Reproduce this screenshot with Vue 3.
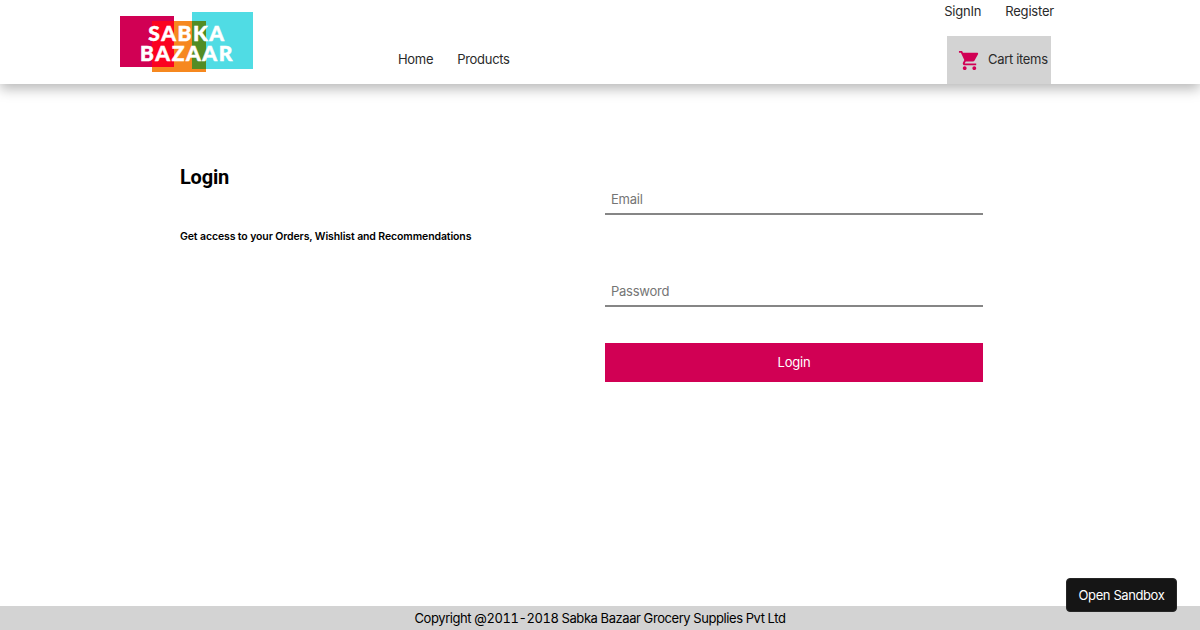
<script setup>
const navLinks = ['Home', 'Products']
const fields = [
  { type: 'email', placeholder: 'Email' },
  { type: 'password', placeholder: 'Password' }
]
</script>

<template>
  <div class="page">
    <header class="header">
      <div class="logo">
        <span class="block pink"></span>
        <span class="block teal"></span>
        <span class="block orange"></span>
        <span class="block red"></span>
        <span class="block green"></span>
        <span class="logo-text">SABKA<br />BAZAAR</span>
      </div>
      <nav class="nav">
        <a v-for="l in navLinks" :key="l" class="nav-link">{{ l }}</a>
      </nav>
      <div class="right">
        <div class="auth">
          <a>SignIn</a>
          <a>Register</a>
        </div>
        <div class="cart">
          <svg class="cart-icon" viewBox="0 0 24 24" width="23" height="23">
            <path fill="#d10054" d="M7 18c-1.1 0-1.99.9-1.99 2S5.900 22 7 22s2-.9 2-2-.9-2-2-2zM1 2v2h2l3.600 7.590-1.350 2.450c-.16.280-.25.610-.25.960 0 1.100.9 2 2 2h12v-2H7.420c-.14 0-.25-.11-.25-.25l.03-.12.9-1.630h7.450c.75 0 1.410-.41 1.750-1.030l3.580-6.490c.08-.14.12-.31.12-.48 0-.55-.45-1-1-1H5.210l-.94-2H1zm16 16c-1.100 0-1.990.9-1.990 2s.89 2 1.990 2 2-.9 2-2-.9-2-2-2z"/>
          </svg>
          <span class="cart-label">Cart items</span>
        </div>
      </div>
    </header>

    <main class="main">
      <section class="intro">
        <h1>Login</h1>
        <p>Get access to your Orders, Wishlist and Recommendations</p>
      </section>
      <form class="form" @submit.prevent>
        <input v-for="f in fields" :key="f.type" :type="f.type" :placeholder="f.placeholder" class="field" />
        <button class="submit" type="submit">Login</button>
      </form>
    </main>

    <footer class="footer">Copyright @2011-2018 Sabka Bazaar Grocery Supplies Pvt Ltd</footer>
    <button class="sandbox">Open Sandbox</button>
  </div>
</template>

<style>
html, body { margin: 0; padding: 0; background: #fff; }
</style>

<style scoped>
.page {
  position: relative;
  width: 1200px;
  height: 630px;
  display: flex;
  flex-direction: column;
  overflow: hidden;
  font-family: Inter, "Liberation Sans", sans-serif;
  letter-spacing: -0.2px;
  color: #2a2a2a;
}
.header {
  height: 84px;
  flex: none;
  display: flex;
  padding: 0 146px 0 120px;
  box-shadow: 0 5px 12px rgba(0, 0, 0, 0.28);
  position: relative;
  box-sizing: border-box;
}
.logo { position: relative; width: 133px; height: 84px; flex: none; }
.block { position: absolute; }
.pink { left: 0; top: 16px; width: 54px; height: 51px; background: #d10054; }
.teal { left: 72px; top: 12px; width: 61px; height: 57px; background: #50dce4; }
.orange { left: 32px; top: 21px; width: 54px; height: 51px; background: #f6881f; }
.red { left: 32px; top: 21px; width: 22px; height: 46px; background: #fb0320; }
.green { left: 72px; top: 21px; width: 14px; height: 48px; background: #528c25; }
.logo-text {
  position: absolute;
  left: 20px;
  top: 23px;
  font-family: Lato, sans-serif;
  font-weight: 900;
  font-size: 21px;
  line-height: 19.500px;
  letter-spacing: 1.600px;
  color: #fff;
  text-align: center;
  width: 94px;
  -webkit-text-stroke: 0.5px #fff;
}
.nav {
  margin-left: 145px;
  display: flex;
  gap: 24px;
  align-items: flex-end;
  padding-bottom: 16px;
  font-size: 13px;
  line-height: 17px;
  letter-spacing: -0.3px;
}
.right {
  margin-left: auto;
  display: flex;
  flex-direction: column;
  align-items: flex-end;
  justify-content: space-between;
}
.auth {
  display: flex;
  gap: 24px;
  font-size: 13px;
  line-height: 17px;
  padding-top: 3px;
  white-space: nowrap;
}
.cart {
  width: 104px;
  height: 48px;
  margin-right: 3px;
  background: #d3d3d3;
  display: flex;
  align-items: center;
  padding-left: 11px;
  box-sizing: border-box;
  gap: 7px;
  font-size: 13px;
  white-space: nowrap;
}
.cart-icon { flex: none; }
.cart-label { padding-bottom: 2px; letter-spacing: -0.32px; }
.main {
  flex: 1;
  display: flex;
  padding: 0 0 0 180px;
}
.intro { width: 425px; flex: none; padding-top: 80px; }
.intro h1 {
  margin: 0;
  font-family: Roboto, sans-serif;
  font-weight: 700;
  font-size: 20px;
  line-height: 26px;
  letter-spacing: -0.2px;
  color: #000;
}
.intro p {
  margin: 40px 0 0;
  font-size: 10.500px;
  line-height: 14px;
  font-weight: 600;
  letter-spacing: -0.11px;
  color: #000;
}
.form { width: 378px; padding-top: 102px; display: flex; flex-direction: column; }
.field {
  height: 29px;
  box-sizing: border-box;
  border: 0;
  border-bottom: 2px solid #868686;
  outline: none;
  padding: 0 6px 1px;
  font: 13px Inter, sans-serif;
  letter-spacing: -0.24px;
  background: transparent;
  margin-bottom: 63px;
}
.field + .field { margin-bottom: 36px; }
.field::placeholder { color: #757575; opacity: 1; }
.submit {
  height: 39px;
  border: 0;
  background: #d10054;
  color: #fff;
  font: 13px Inter, sans-serif;
  letter-spacing: -0.2px;
  padding: 0 0 1px;
}
.footer {
  height: 24px;
  flex: none;
  background: #d3d3d3;
  color: #000;
  text-align: center;
  font-size: 13px;
  font-variant-numeric: tabular-nums;
  line-height: 24px;
  letter-spacing: -0.42px;
}
.sandbox {
  position: absolute;
  left: 1066px;
  top: 578px;
  width: 111px;
  height: 34px;
  border: 1px solid #262626;
  border-radius: 4px;
  background: #151515;
  color: #fff;
  font: 13px Inter, sans-serif;
  letter-spacing: -0.4px;
  padding: 0 0 1px;
}
</style>
